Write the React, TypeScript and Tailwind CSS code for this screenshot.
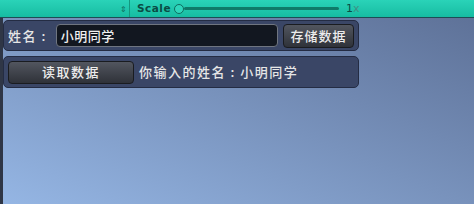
import React from "react";

export default function App() {
  const cjk = { fontFamily: '"Noto Sans CJK SC", "Noto Sans", sans-serif' };
  return (
    <div className="w-[474px] h-[204px] overflow-hidden flex flex-col bg-gradient-to-bl from-[#5c6f95] to-[#95b6e4]" style={cjk}>
      {/* top bar */}
      <div className="h-[18px] shrink-0 flex items-center bg-gradient-to-b from-[#2ad3b8] to-[#16bca2] border-b border-[#1d4d55]">
        <div className="w-[120px] shrink-0" />
        <span className="text-[8px] leading-none text-[#0c6a5c] w-[7px]">⇕</span>
        <div className="w-px h-[17px] bg-[#14977f] ml-[2px]" />
        <span className="ml-[7px] text-[10.5px] font-bold text-[#0a4d45] leading-none tracking-[0.5px]" style={{ fontFamily: '"DejaVu Sans", sans-serif' }}>Scale</span>
        <div className="ml-[3px] flex items-center">
          <div className="w-[10px] h-[10px] rounded-full border-[1.5px] border-[#0e6c5f] bg-[#2ed6bb]" />
          <div className="w-[155px] h-[3px] rounded-full bg-[#0f7a69]" />
        </div>
        <span className="ml-[7px] text-[11px] leading-none text-[#0a4d45]" style={{ fontFamily: '"DejaVu Sans", sans-serif' }}>1<span className="text-[#3f8f85]">x</span></span>
      </div>
      <div className="flex flex-1">
        <div className="w-[3px] shrink-0 bg-[#2f3646]" />
        <div className="flex flex-col gap-[5px] pt-[2px] w-[356px]">
          <div className="h-[31px] rounded-[5px] bg-[#3a4666] border border-[#242c43] flex items-center pl-[4px] pr-[4px]">
            <span className="text-[13px] text-[#e6e6e6] w-[48px] tracking-[1.5px] font-medium whitespace-pre">姓名 :</span>
            <div className="w-[223px] h-[23px] rounded-[4px] bg-[#121720] border border-[#6f7580] flex items-center pl-[4px] text-[13px] text-[#f0f0f0] font-medium tracking-[0.5px]">小明同学</div>
            <button className="ml-[5px] w-[71px] h-[24px] rounded-[4px] border border-[#1a1c20] bg-gradient-to-b from-[#52565f] to-[#2f3239] text-[13px] text-[#ececec] font-medium flex items-center justify-center tracking-[1px]">存储数据</button>
          </div>
          <div className="h-[32px] rounded-[5px] bg-[#3a4666] border border-[#242c43] flex items-center pl-[4px]">
            <button className="w-[126px] h-[23px] rounded-[4px] border border-[#1a1c20] bg-gradient-to-b from-[#52565f] to-[#2f3239] text-[13px] text-[#ececec] font-medium flex items-center justify-center tracking-[1.5px]">读取数据</button>
            <span className="ml-[5px] text-[13px] text-[#e6e6e6] font-medium tracking-[1.5px] whitespace-pre">你输入的姓名 : 小明同学</span>
          </div>
        </div>
      </div>
    </div>
  );
}
